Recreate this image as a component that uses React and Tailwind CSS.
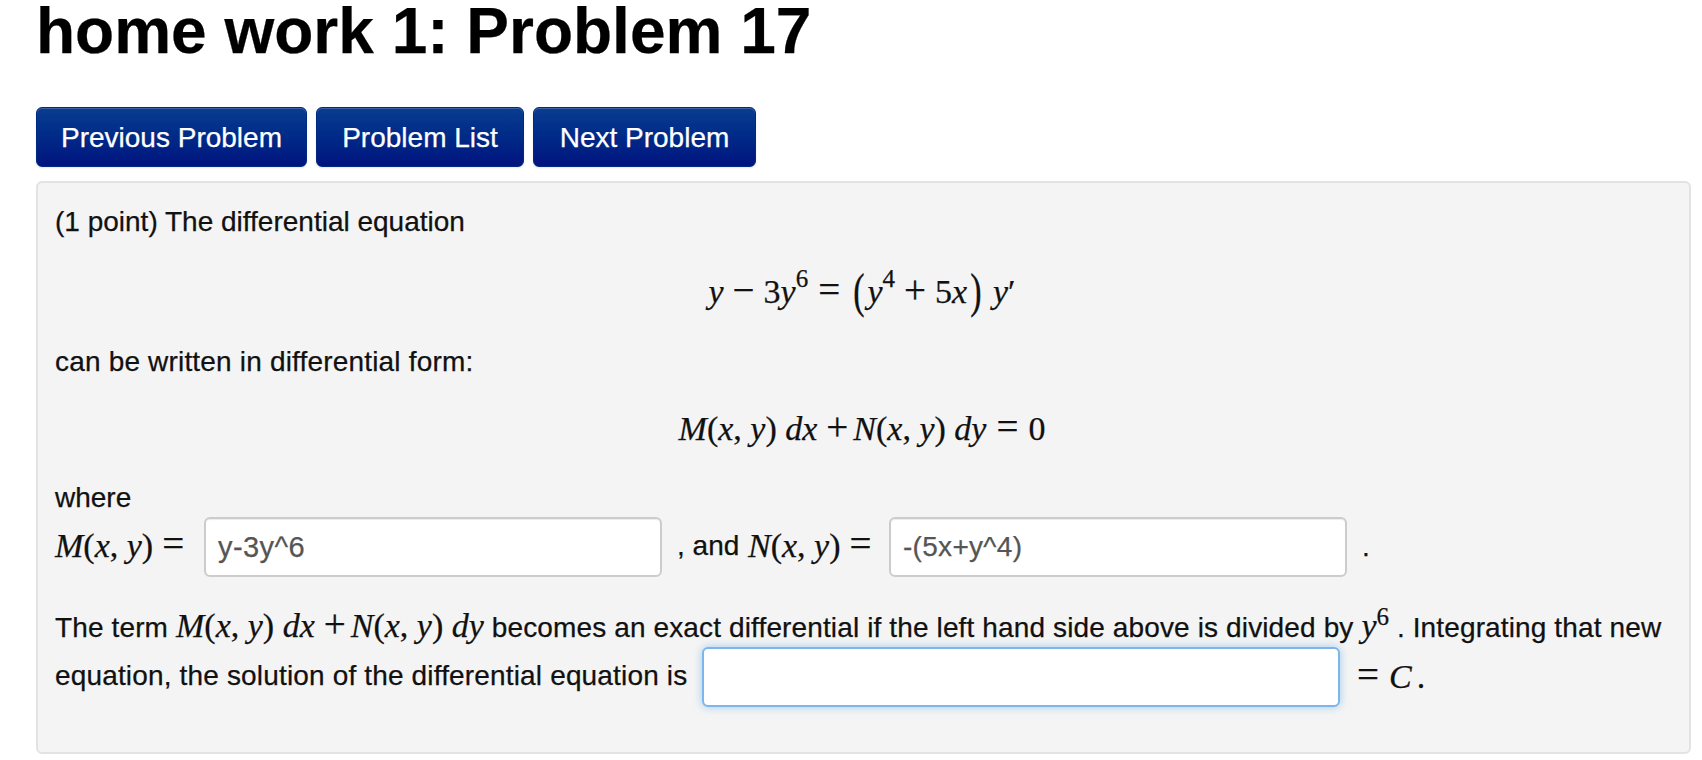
import React from 'react';

const BUTTONS = ['Previous Problem', 'Problem List', 'Next Problem'];

const NavButton = ({ label, className }) => (
  <button className={`h-[60px] rounded-[6px] border border-[#002a80] bg-gradient-to-b from-[#0a3c8f] to-[#00127f] pt-[1px] text-[28px] text-white shadow-[inset_0_1px_0_rgba(255,255,255,0.2),0_1px_2px_rgba(0,0,0,0.1)] ${className}`}>
    {label}
  </button>
);

const I = ({ children }) => <i className="italic">{children}</i>;

const Math = ({ children, className = '' }) => (
  <span className={`font-['Liberation_Serif',serif] text-[34px] tracking-normal text-[#111] ${className}`}>{children}</span>
);

const Sup = ({ children, className = 'top-[-3px]' }) => (
  <sup className={`relative align-super text-[25px] leading-none ${className}`}>{children}</sup>
);

// operators sit wider than the plain glyph in the picture
const Op = ({ children, className = 'ml-[9px] mr-[5px]' }) => <span className={`text-[39px] leading-none ${className}`}>{children}</span>;

const Paren = ({ children, className }) => <span className={`inline-block origin-center scale-y-[1.4] leading-none ${className}`}>{children}</span>;

const Pair = ({ name }) => (
  <>
    <I>{name}</I>(<I>x</I>, <I>y</I>)
  </>
);

const Field = ({ value, className = '' }) => (
  <input
    readOnly
    value={value}
    className={`h-[60px] rounded-[6px] border-2 border-[#cccccc] bg-white px-[12px] text-[#555] shadow-[inset_0_1px_1px_rgba(0,0,0,0.075)] outline-none ${className}`}
  />
);

export default function App() {
  return (
    <div className="h-[760px] overflow-hidden bg-white pl-[36px] pr-[11px] font-['Liberation_Sans',Arial,sans-serif] text-[28px] text-[#111] [-webkit-text-stroke:0.25px]">
      <h1 className="h-[107px] text-[64px] leading-[62px] font-bold text-black">home work 1: Problem 17</h1>

      <div className="flex gap-[9px]">
        <NavButton label={BUTTONS[0]} className="w-[271px]" />
        <NavButton label={BUTTONS[1]} className="w-[208px]" />
        <NavButton label={BUTTONS[2]} className="w-[223px]" />
      </div>

      <div className="mt-[14px] h-[573px] rounded-[6px] border-2 border-[#e3e3e3] bg-[#f4f4f4] pl-[17px] pr-[20px] pt-[19px]">
        <p className="h-[40px] leading-[40px]">(1 point) The differential equation</p>

        <div className="mt-[29px] flex h-[40px] items-center justify-center">
          <Math>
            <I>y</I><Op className="mx-[9px]">−</Op>3<I>y</I><Sup>6</Sup><Op className="mx-[10px]">=</Op>
            <Paren className="mx-[3px]">(</Paren><I>y</I><Sup>4</Sup><Op className="mx-[9px]">+</Op>5<I>x</I><Paren className="mx-[3px]">)</Paren> <I>y</I>′
          </Math>
        </div>

        <p className="mt-[31px] h-[40px] leading-[40px] tracking-[0.18px]">can be written in differential form:</p>

        <div className="mt-[26px] flex h-[40px] items-center justify-center">
          <Math><Pair name="M" /> <I>dx</I><Op>+</Op><Pair name="N" /> <I>dy</I><Op className="mx-[10px]">=</Op>0</Math>
        </div>

        <p className="mt-[30px] h-[39px] leading-[40px]">where</p>

        <div className="flex h-[60px] items-center">
          <Math className="w-[149px] pb-[3px]"><Pair name="M" /><Op className="mx-[9px]">=</Op></Math>
          <Field value="y-3y^6" className="w-[458px] text-[29px] tracking-[0.4px]" />
          <span className="ml-[15px] w-[71px] pb-[2px]">, and</span>
          <Math className="w-[141px] pb-[3px]"><Pair name="N" /><Op className="mx-[9px]">=</Op></Math>
          <Field value="-(5x+y^4)" className="w-[458px] text-[28px] tracking-[0.3px]" />
          <span className="ml-[15px]">.</span>
        </div>

        <p className="mt-[27px] h-[40px] leading-[40px] whitespace-nowrap tracking-[0.13px]">
          The term <Math><Pair name="M" /> <I>dx</I><Op>+</Op><Pair name="N" /> <I>dy</I></Math> becomes an exact differential if the left hand side above is divided by <Math><I>y</I><Sup className="top-[0px]">6</Sup></Math> . Integrating that new
        </p>

        <div className="mt-[3px] flex h-[60px] items-center">
          <span className="w-[647px] whitespace-nowrap pb-[2px] tracking-[0.16px]">equation, the solution of the differential equation is</span>
          <input
            readOnly
            className="h-[60px] w-[638px] rounded-[6px] border-2 border-[#7db5ec] bg-white shadow-[0_0_8px_rgba(102,175,233,0.6)] outline-none"
          />
          <Math className="ml-[7px] pb-[2px]"><Op className="mx-[10px]">=</Op><I>C</I><span className="ml-[5px]">.</span></Math>
        </div>
      </div>
    </div>
  );
}
